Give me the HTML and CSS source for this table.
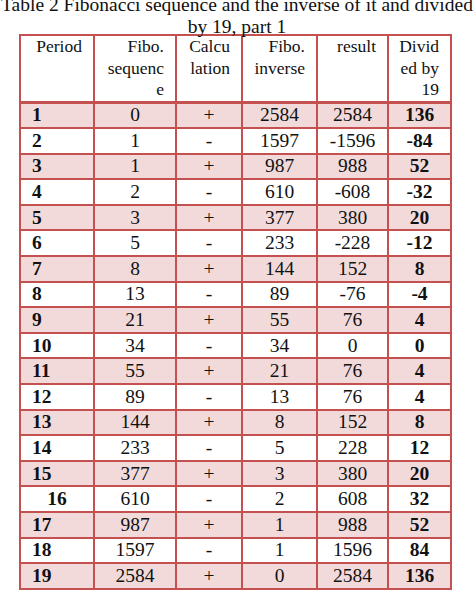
FILE: index.html
```html
<!DOCTYPE html>
<html>
<head>
<meta charset="utf-8">
<link rel="stylesheet" href="styles.css">
</head>
<body>
<div class="title">
  <div class="title-line">Table 2 Fibonacci sequence and the inverse of it and divided</div>
  <div class="title-line">by 19, part 1</div>
</div>
<table class="fibo">
  <colgroup>
    <col class="c1"><col class="c2"><col class="c3"><col class="c4"><col class="c5"><col class="c6">
  </colgroup>
  <thead>
    <tr>
      <th>Period</th>
      <th>Fibo.<br>sequenc<br>e</th>
      <th>Calcu<br>lation</th>
      <th>Fibo.<br>inverse</th>
      <th>result</th>
      <th>Divid<br>ed by<br>19</th>
    </tr>
  </thead>
  <tbody>
    <tr class="shade"><td class="per">1</td><td>0</td><td>+</td><td>2584</td><td>2584</td><td class="div">136</td></tr>
    <tr><td class="per">2</td><td>1</td><td>-</td><td>1597</td><td>-1596</td><td class="div">-84</td></tr>
    <tr class="shade"><td class="per">3</td><td>1</td><td>+</td><td>987</td><td>988</td><td class="div">52</td></tr>
    <tr><td class="per">4</td><td>2</td><td>-</td><td>610</td><td>-608</td><td class="div">-32</td></tr>
    <tr class="shade"><td class="per">5</td><td>3</td><td>+</td><td>377</td><td>380</td><td class="div">20</td></tr>
    <tr><td class="per">6</td><td>5</td><td>-</td><td>233</td><td>-228</td><td class="div">-12</td></tr>
    <tr class="shade"><td class="per">7</td><td>8</td><td>+</td><td>144</td><td>152</td><td class="div">8</td></tr>
    <tr><td class="per">8</td><td>13</td><td>-</td><td>89</td><td>-76</td><td class="div">-4</td></tr>
    <tr class="shade"><td class="per">9</td><td>21</td><td>+</td><td>55</td><td>76</td><td class="div">4</td></tr>
    <tr><td class="per">10</td><td>34</td><td>-</td><td>34</td><td>0</td><td class="div">0</td></tr>
    <tr class="shade"><td class="per">11</td><td>55</td><td>+</td><td>21</td><td>76</td><td class="div">4</td></tr>
    <tr><td class="per">12</td><td>89</td><td>-</td><td>13</td><td>76</td><td class="div">4</td></tr>
    <tr class="shade"><td class="per">13</td><td>144</td><td>+</td><td>8</td><td>152</td><td class="div">8</td></tr>
    <tr><td class="per">14</td><td>233</td><td>-</td><td>5</td><td>228</td><td class="div">12</td></tr>
    <tr class="shade"><td class="per">15</td><td>377</td><td>+</td><td>3</td><td>380</td><td class="div">20</td></tr>
    <tr><td class="per per-center">16</td><td>610</td><td>-</td><td>2</td><td>608</td><td class="div">32</td></tr>
    <tr class="shade"><td class="per">17</td><td>987</td><td>+</td><td>1</td><td>988</td><td class="div">52</td></tr>
    <tr><td class="per">18</td><td>1597</td><td>-</td><td>1</td><td>1596</td><td class="div">84</td></tr>
    <tr class="shade"><td class="per">19</td><td>2584</td><td>+</td><td>0</td><td>2584</td><td class="div">136</td></tr>
  </tbody>
</table>
</body>
</html>
```
FILE: styles.css
```css
html, body {
  margin: 0;
  padding: 0;
  background: #ffffff;
}
body {
  width: 474px;
  height: 591px;
  overflow: hidden;
  font-family: "Liberation Serif", "Times New Roman", serif;
  color: #111111;
}
.title {
  display: flex;
  flex-direction: column;
  align-items: center;
  margin-top: -6px;
  font-size: 19.5px;
  line-height: 22px;
  height: 40px;
}
.title-line {
  white-space: nowrap;
}
.fibo {
  margin-left: 19px;
  width: 431px;
  border-collapse: collapse;
  table-layout: fixed;
  border: 2px solid #c4504f;
}
.c1 { width: 74px; }
.c2 { width: 82px; }
.c3 { width: 66px; }
.c4 { width: 75px; }
.c5 { width: 71px; }
.c6 { width: 63px; }
.fibo th,
.fibo td {
  border: 2px solid #c4504f;
  padding: 0;
}
.fibo th {
  font-weight: normal;
  font-size: 17.5px;
  line-height: 21.5px;
  text-align: right;
  vertical-align: top;
  padding: 0 11px 0 0;
  height: 57px;
  border-bottom: 3px solid #c4504f;
}
.fibo td {
  font-size: 19.5px;
  line-height: 22px;
  text-align: center;
  vertical-align: middle;
  height: 23.6px;
}
.fibo tr.shade td {
  background: #f2dadb;
}
.fibo td.per {
  font-weight: bold;
  text-align: left;
  padding-left: 11px;
}
.fibo td.per-center {
  text-align: center;
  padding-left: 0;
}
.fibo td.div {
  font-weight: bold;
}
```
